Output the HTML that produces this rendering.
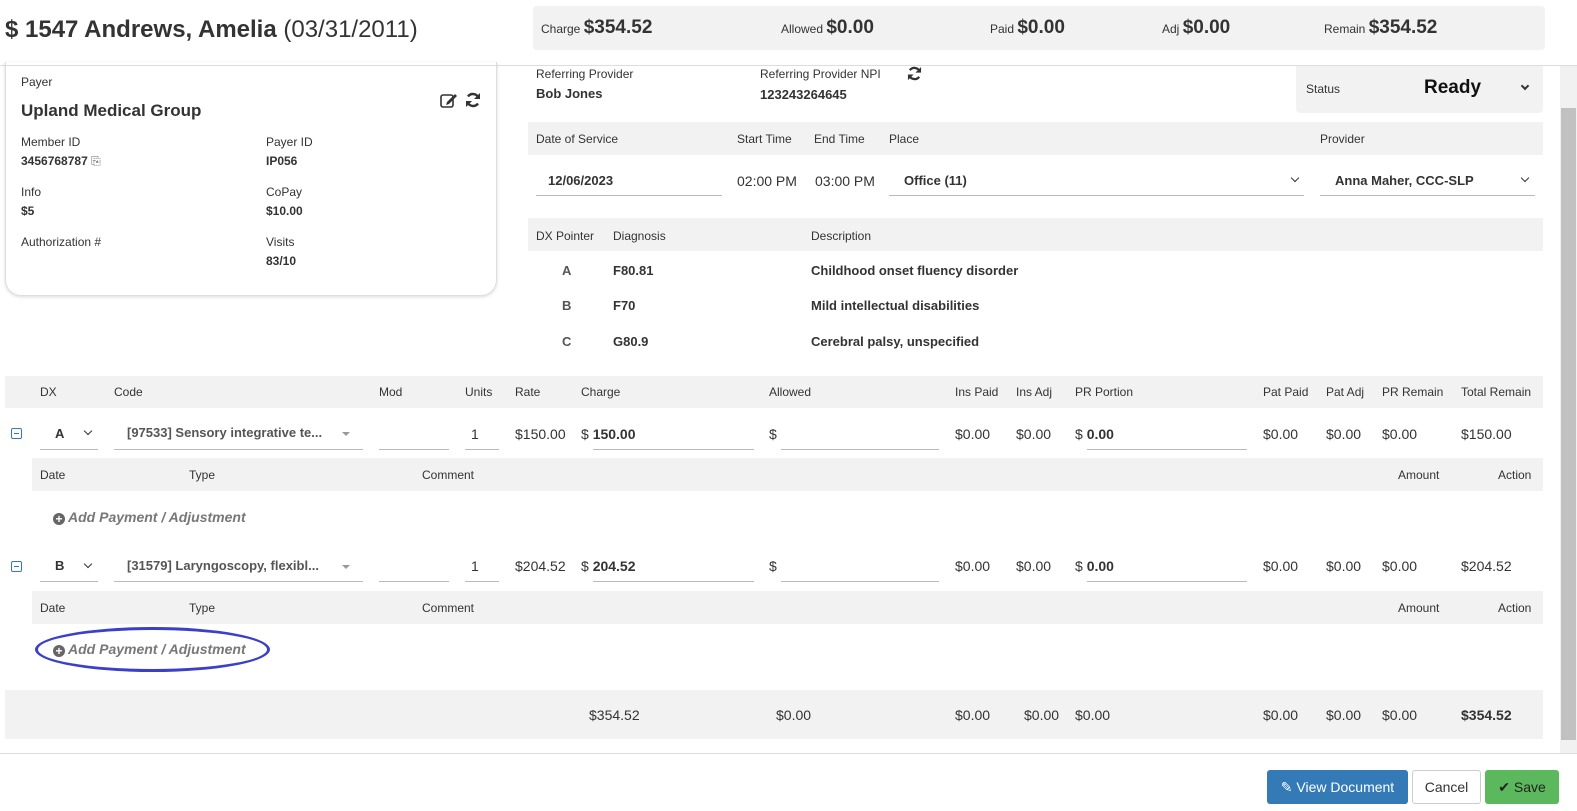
<!DOCTYPE html>
<html><head><meta charset="utf-8"><style>
*{box-sizing:border-box;margin:0;padding:0}
body{width:1577px;height:811px;overflow:hidden;background:#fff;font-family:"Liberation Sans",Arial,sans-serif;color:#333;font-size:13px;position:relative}
.a{position:absolute;white-space:nowrap;line-height:16px}
.b{font-weight:bold}
.bg{position:absolute;background:#f2f2f2}
.ul{position:absolute;border-bottom:1px solid #bbb;height:1px}
.g{color:#555}
.chev{position:absolute;width:7px;height:7px;border-right:2px solid #333;border-bottom:2px solid #333;transform:rotate(45deg)}
.tri{position:absolute;width:0;height:0;border-left:4px solid transparent;border-right:4px solid transparent;border-top:4px solid #999}
.minus{position:absolute;width:11px;height:11px;border:1px solid #337ab7;border-radius:2px}
.minus:after{content:"";position:absolute;left:2px;top:4px;width:5px;height:1px;background:#337ab7}
.plus{display:inline-block;width:12px;height:12px;border-radius:50%;background:#666;color:#fff;font-style:normal;font-size:12px;line-height:12px;text-align:center;font-weight:bold;vertical-align:-1px;margin-right:3px}
.add{font-style:italic;font-weight:bold;color:#777;font-size:14px}
</style></head><body>
<div class="a" style="left:5px;top:15px;font-size:24px;line-height:30px;color:#333"><b>$ 1547 Andrews, Amelia</b> <span style="font-weight:normal">(03/31/2011)</span></div>
<div class="bg" style="left:533px;top:6px;width:1012px;height:44px;border-radius:4px"></div>
<div class="a" style="left:541px;top:20px;font-size:12px">Charge <b style="font-size:19px">$354.52</b></div>
<div class="a" style="left:781px;top:20px;font-size:12px">Allowed <b style="font-size:19px">$0.00</b></div>
<div class="a" style="left:990px;top:20px;font-size:12px">Paid <b style="font-size:19px">$0.00</b></div>
<div class="a" style="left:1162px;top:20px;font-size:12px">Adj <b style="font-size:19px">$0.00</b></div>
<div class="a" style="left:1324px;top:20px;font-size:12px">Remain <b style="font-size:19px">$354.52</b></div>
<div style="position:absolute;left:0;top:65px;width:1577px;height:1px;background:#ddd"></div>
<div style="position:absolute;left:1560px;top:66px;width:17px;height:687px;background:#f1f1f1"></div>
<div style="position:absolute;left:1561px;top:108px;width:15px;height:632px;background:#c1c1c1"></div>
<div style="position:absolute;left:5px;top:62px;width:492px;height:234px;border:1px solid #ddd;border-top:none;border-radius:0 0 16px 16px;box-shadow:0 1px 3px rgba(0,0,0,.15)"></div>
<div class="a" style="left:21px;top:74px;font-size:12px">Payer</div>
<div class="a b" style="left:21px;top:101px;font-size:17px;line-height:20px">Upland Medical Group</div>
<svg style="position:absolute;left:440px;top:92px" width="18" height="16" viewBox="0 0 18 16"><rect x="1" y="3" width="12" height="12" rx="2" fill="none" stroke="#333" stroke-width="1.6"/><path d="M7 10 L15 2 L17 4 L9 12 L6 13Z" fill="#333"/></svg>
<svg style="position:absolute;left:465px;top:92px" width="16" height="16" viewBox="0 0 16 16"><path d="M13.5 6A6 6 0 0 0 3 4.5M2.5 10A6 6 0 0 0 13 11.5" fill="none" stroke="#333" stroke-width="2.4"/><path d="M15 1v6h-6zM1 15v-6h6z" fill="#333"/></svg>
<div class="a" style="left:21px;top:134px;font-size:12px">Member ID</div>
<div class="a b" style="left:21px;top:153px;font-size:12px">3456768787 <span style="font-weight:normal;color:#666">⎘</span></div>
<div class="a" style="left:266px;top:134px;font-size:12px">Payer ID</div>
<div class="a b" style="left:266px;top:153px;font-size:12px">IP056</div>
<div class="a" style="left:21px;top:184px;font-size:12px">Info</div>
<div class="a b" style="left:21px;top:203px;font-size:12px">$5</div>
<div class="a" style="left:266px;top:184px;font-size:12px">CoPay</div>
<div class="a b" style="left:266px;top:203px;font-size:12px">$10.00</div>
<div class="a" style="left:21px;top:234px;font-size:12px">Authorization #</div>
<div class="a" style="left:266px;top:234px;font-size:12px">Visits</div>
<div class="a b" style="left:266px;top:253px;font-size:12px">83/10</div>
<div class="a" style="left:536px;top:66px;font-size:12px">Referring Provider</div>
<div class="a b" style="left:536px;top:86px">Bob Jones</div>
<div class="a" style="left:760px;top:66px;font-size:12px">Referring Provider NPI</div>
<div class="a b" style="left:760px;top:87px">123243264645</div>
<svg style="position:absolute;left:907px;top:66px" width="15" height="15" viewBox="0 0 16 16"><path d="M13.5 6A6 6 0 0 0 3 4.5M2.5 10A6 6 0 0 0 13 11.5" fill="none" stroke="#333" stroke-width="2.4"/><path d="M15 1v6h-6zM1 15v-6h6z" fill="#333"/></svg>
<div class="bg" style="left:1296px;top:66px;width:247px;height:47px;border-radius:0 0 4px 4px"></div>
<div class="a" style="left:1306px;top:81px;font-size:12px">Status</div>
<div class="a b" style="left:1424px;top:77px;font-size:19px;line-height:22px;color:#111">Ready</div>
<div class="chev" style="left:1522px;top:83px;width:6px;height:6px"></div>
<div class="bg" style="left:528px;top:122px;width:1015px;height:33px"></div>
<div class="a" style="left:536px;top:131px;font-size:12px">Date of Service</div>
<div class="a" style="left:737px;top:131px;font-size:12px">Start Time</div>
<div class="a" style="left:814px;top:131px;font-size:12px">End Time</div>
<div class="a" style="left:889px;top:131px;font-size:12px">Place</div>
<div class="a" style="left:1320px;top:131px;font-size:12px">Provider</div>
<div class="a b" style="left:548px;top:173px">12/06/2023</div>
<div class="ul" style="left:536px;top:195px;width:186px"></div>
<div class="a" style="left:737px;top:173px;font-size:14px">02:00 PM</div>
<div class="a" style="left:815px;top:173px;font-size:14px">03:00 PM</div>
<div class="a b" style="left:904px;top:173px">Office (11)</div>
<div class="chev" style="left:1292px;top:175px;width:6px;height:6px;border-width:1.5px"></div>
<div class="ul" style="left:889px;top:195px;width:415px"></div>
<div class="a b" style="left:1335px;top:173px">Anna Maher, CCC-SLP</div>
<div class="chev" style="left:1522px;top:175px;width:6px;height:6px;border-width:1.5px"></div>
<div class="ul" style="left:1320px;top:195px;width:215px"></div>
<div class="bg" style="left:528px;top:218px;width:1015px;height:33px"></div>
<div class="a" style="left:536px;top:228px;font-size:12px">DX Pointer</div>
<div class="a" style="left:613px;top:228px;font-size:12px">Diagnosis</div>
<div class="a" style="left:811px;top:228px;font-size:12px">Description</div>
<div class="a b g" style="left:562px;top:263px">A</div><div class="a b" style="left:613px;top:263px">F80.81</div><div class="a b" style="left:811px;top:263px">Childhood onset fluency disorder</div>
<div class="a b g" style="left:562px;top:298px">B</div><div class="a b" style="left:613px;top:298px">F70</div><div class="a b" style="left:811px;top:298px">Mild intellectual disabilities</div>
<div class="a b g" style="left:562px;top:334px">C</div><div class="a b" style="left:613px;top:334px">G80.9</div><div class="a b" style="left:811px;top:334px">Cerebral palsy, unspecified</div>
<div class="bg" style="left:5px;top:376px;width:1538px;height:32px"></div>
<div class="a" style="left:40px;top:384px;font-size:12px">DX</div>
<div class="a" style="left:114px;top:384px;font-size:12px">Code</div>
<div class="a" style="left:379px;top:384px;font-size:12px">Mod</div>
<div class="a" style="left:465px;top:384px;font-size:12px">Units</div>
<div class="a" style="left:515px;top:384px;font-size:12px">Rate</div>
<div class="a" style="left:581px;top:384px;font-size:12px">Charge</div>
<div class="a" style="left:769px;top:384px;font-size:12px">Allowed</div>
<div class="a" style="left:955px;top:384px;font-size:12px">Ins Paid</div>
<div class="a" style="left:1016px;top:384px;font-size:12px">Ins Adj</div>
<div class="a" style="left:1075px;top:384px;font-size:12px">PR Portion</div>
<div class="a" style="left:1263px;top:384px;font-size:12px">Pat Paid</div>
<div class="a" style="left:1326px;top:384px;font-size:12px">Pat Adj</div>
<div class="a" style="left:1382px;top:384px;font-size:12px">PR Remain</div>
<div class="a" style="left:1461px;top:384px;font-size:12px">Total Remain</div>
<div class="minus" style="left:11px;top:428px"></div>
<div class="a b" style="left:55px;top:426px">A</div><div class="chev" style="left:85px;top:428px;width:6px;height:6px;border-width:1.5px"></div>
<div class="ul" style="left:40px;top:449px;width:58px"></div>
<div class="a b g" style="left:127px;top:425px">[97533] Sensory integrative te...</div><div class="tri" style="left:342px;top:432px"></div>
<div class="ul" style="left:114px;top:449px;width:249px"></div>
<div class="ul" style="left:379px;top:449px;width:70px"></div>
<div class="a" style="left:471px;top:426px;font-size:14px">1</div>
<div class="ul" style="left:465px;top:449px;width:34px"></div>
<div class="a" style="left:515px;top:426px;font-size:14px">$150.00</div>
<div class="a" style="left:581px;top:426px;font-size:14px">$ <b>150.00</b></div>
<div class="ul" style="left:593px;top:449px;width:161px"></div>
<div class="a" style="left:769px;top:426px;font-size:14px">$</div>
<div class="ul" style="left:781px;top:449px;width:158px"></div>
<div class="a" style="left:955px;top:426px;font-size:14px">$0.00</div>
<div class="a" style="left:1016px;top:426px;font-size:14px">$0.00</div>
<div class="a" style="left:1075px;top:426px;font-size:14px">$ <b>0.00</b></div>
<div class="ul" style="left:1087px;top:449px;width:160px"></div>
<div class="a" style="left:1263px;top:426px;font-size:14px">$0.00</div>
<div class="a" style="left:1326px;top:426px;font-size:14px">$0.00</div>
<div class="a" style="left:1382px;top:426px;font-size:14px">$0.00</div>
<div class="a" style="left:1461px;top:426px;font-size:14px">$150.00</div>
<div class="bg" style="left:32px;top:458px;width:1511px;height:33px"></div>
<div class="a" style="left:40px;top:467px;font-size:12px">Date</div>
<div class="a" style="left:189px;top:467px;font-size:12px">Type</div>
<div class="a" style="left:422px;top:467px;font-size:12px">Comment</div>
<div class="a" style="left:1398px;top:467px;font-size:12px">Amount</div>
<div class="a" style="left:1498px;top:467px;font-size:12px">Action</div>
<div class="a add" style="left:53px;top:509px"><i class="plus">+</i>Add Payment / Adjustment</div>
<div class="minus" style="left:11px;top:561px"></div>
<div class="a b" style="left:55px;top:558px">B</div><div class="chev" style="left:85px;top:561px;width:6px;height:6px;border-width:1.5px"></div>
<div class="ul" style="left:40px;top:581px;width:58px"></div>
<div class="a b g" style="left:127px;top:558px">[31579] Laryngoscopy, flexibl...</div><div class="tri" style="left:342px;top:565px"></div>
<div class="ul" style="left:114px;top:581px;width:249px"></div>
<div class="ul" style="left:379px;top:581px;width:70px"></div>
<div class="a" style="left:471px;top:558px;font-size:14px">1</div>
<div class="ul" style="left:465px;top:581px;width:34px"></div>
<div class="a" style="left:515px;top:558px;font-size:14px">$204.52</div>
<div class="a" style="left:581px;top:558px;font-size:14px">$ <b>204.52</b></div>
<div class="ul" style="left:593px;top:581px;width:161px"></div>
<div class="a" style="left:769px;top:558px;font-size:14px">$</div>
<div class="ul" style="left:781px;top:581px;width:158px"></div>
<div class="a" style="left:955px;top:558px;font-size:14px">$0.00</div>
<div class="a" style="left:1016px;top:558px;font-size:14px">$0.00</div>
<div class="a" style="left:1075px;top:558px;font-size:14px">$ <b>0.00</b></div>
<div class="ul" style="left:1087px;top:581px;width:160px"></div>
<div class="a" style="left:1263px;top:558px;font-size:14px">$0.00</div>
<div class="a" style="left:1326px;top:558px;font-size:14px">$0.00</div>
<div class="a" style="left:1382px;top:558px;font-size:14px">$0.00</div>
<div class="a" style="left:1461px;top:558px;font-size:14px">$204.52</div>
<div class="bg" style="left:32px;top:591px;width:1511px;height:33px"></div>
<div class="a" style="left:40px;top:600px;font-size:12px">Date</div>
<div class="a" style="left:189px;top:600px;font-size:12px">Type</div>
<div class="a" style="left:422px;top:600px;font-size:12px">Comment</div>
<div class="a" style="left:1398px;top:600px;font-size:12px">Amount</div>
<div class="a" style="left:1498px;top:600px;font-size:12px">Action</div>
<div class="a add" style="left:53px;top:641px"><i class="plus">+</i>Add Payment / Adjustment</div>
<div style="position:absolute;left:35px;top:627px;width:235px;height:45px;border:3px solid #3b3fc9;border-radius:50%"></div>
<div class="bg" style="left:5px;top:690px;width:1538px;height:49px"></div>
<div class="a" style="left:589px;top:707px;font-size:14px">$354.52</div>
<div class="a" style="left:776px;top:707px;font-size:14px">$0.00</div>
<div class="a" style="left:955px;top:707px;font-size:14px">$0.00</div>
<div class="a" style="left:1024px;top:707px;font-size:14px">$0.00</div>
<div class="a" style="left:1075px;top:707px;font-size:14px">$0.00</div>
<div class="a" style="left:1263px;top:707px;font-size:14px">$0.00</div>
<div class="a" style="left:1326px;top:707px;font-size:14px">$0.00</div>
<div class="a" style="left:1382px;top:707px;font-size:14px">$0.00</div>
<div class="a b" style="left:1461px;top:707px;font-size:14px">$354.52</div>
<div style="position:absolute;left:0;top:753px;width:1577px;height:1px;background:#ddd"></div>
<div style="position:absolute;left:1267px;top:770px;width:141px;height:34px;background:#337ab7;border-radius:3px;color:#fff;font-size:14px;line-height:34px;text-align:center">✎ View Document</div>
<div style="position:absolute;left:1412px;top:770px;width:69px;height:34px;border:1px solid #ccc;border-radius:3px;color:#333;font-size:14px;line-height:32px;text-align:center">Cancel</div>
<div style="position:absolute;left:1485px;top:770px;width:74px;height:34px;background:#5cb85c;border-radius:3px;color:#222;font-size:14px;line-height:34px;text-align:center">✔ Save</div>
</body></html>
